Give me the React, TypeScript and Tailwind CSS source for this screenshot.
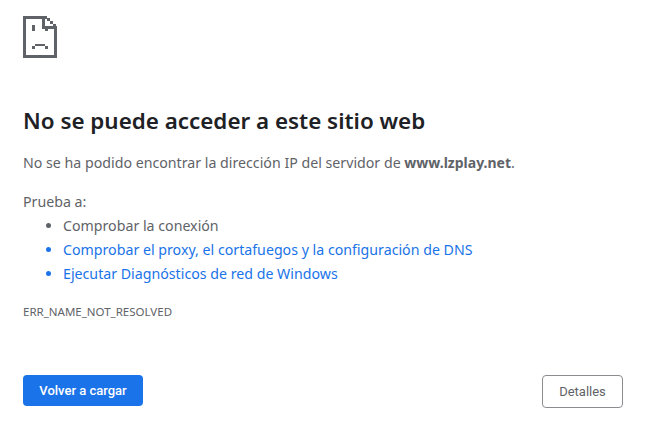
import React from 'react';

const SadTab = () => (
  <svg width="34" height="42" viewBox="0 0 34 42" shapeRendering="crispEdges" fill="#5f6368">
    <rect x="0" y="0" width="3" height="42" />
    <rect x="0" y="0" width="24" height="3" />
    <rect x="0" y="39" width="34" height="3" />
    <rect x="31" y="10" width="3" height="32" />
    <rect x="19" y="0" width="3" height="13" />
    <rect x="19" y="10" width="15" height="3" />
    <rect x="24" y="2" width="3" height="3" />
    <rect x="27" y="5" width="3" height="3" />
    <rect x="30" y="8" width="3" height="3" />
    <rect x="9" y="9" width="3" height="6" />
    <rect x="22" y="12" width="3" height="3" />
    <rect x="12" y="28" width="10" height="2" />
    <rect x="9" y="30" width="3" height="3" />
    <rect x="22" y="30" width="3" height="3" />
  </svg>
);

export default function App() {
  return (
    <div className="w-[650px] h-[424px] bg-white flex flex-col pl-[23px] pr-[27px] pt-[16px] pb-[16px] font-['Noto_Sans','Open_Sans',sans-serif] text-[#5f6368] overflow-hidden">
      <SadTab />
      <h1 className="mt-[47px] text-[22.4px] leading-[32px] font-semibold text-[#202124]">
        No se puede acceder a este sitio web
      </h1>
      <p className="mt-[14px] text-[14.2px] leading-[24px]">
        No se ha podido encontrar la dirección IP del servidor de <strong className="font-bold text-[14px]">www.lzplay.net</strong>.
      </p>
      <p className="mt-[15px] text-[14.2px] leading-[24px]">Prueba a:</p>
      <ul className="list-disc pl-[40px] text-[14.2px] leading-[24px]">
        <li>Comprobar la conexión</li>
        <li className="text-[#1a73e8]">Comprobar el proxy, el cortafuegos y la configuración de DNS</li>
        <li className="text-[#1a73e8]">Ejecutar Diagnósticos de red de Windows</li>
      </ul>
      <div className="mt-[18px] text-[11.5px] leading-[16px]">ERR_NAME_NOT_RESOLVED</div>
      <div className="mt-auto flex items-start justify-between">
        <button className="w-[120px] h-[31px] rounded bg-[#1a73e8] text-white text-[13px] font-medium font-['Roboto',sans-serif]">
          Volver a cargar
        </button>
        <button className="w-[81px] h-[33px] rounded border border-[#8a8c90] bg-white text-[#5f6368] text-[13px] font-['Roboto',sans-serif]">
          Detalles
        </button>
      </div>
    </div>
  );
}
